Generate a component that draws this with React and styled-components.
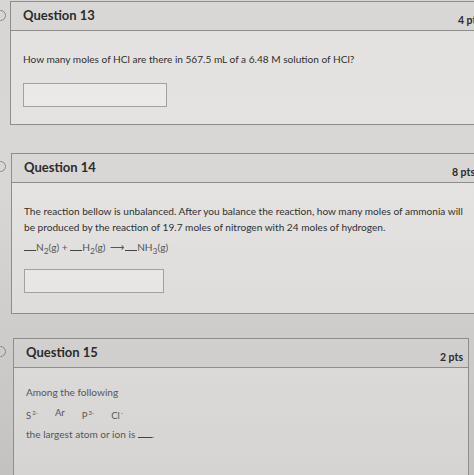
import styled, { createGlobalStyle } from "styled-components";

const GlobalStyle = createGlobalStyle`
    html, body {
        margin: 0;
        padding: 0;
    }
    body {
        width: 474px;
        height: 475px;
        overflow: hidden;
        background: linear-gradient(180deg, #d8d6d4 0%, #d9d7d5 40%, #c4c2c0 100%);
        font-family: Lato, "Open Sans", sans-serif;
        color: #2f2f2f;
    }
`;

const Page = styled.div`
    display: flex;
    flex-direction: column;
    padding-top: 1px;
`;

const Row = styled.div`
    display: flex;
    align-items: flex-start;
    margin-top: ${p => p.$top}px;
`;

const Gutter = styled.div`
    width: ${p => p.$gutter}px;
    flex: none;
    display: flex;
    justify-content: flex-start;
    padding-top: ${p => p.$markTop}px;
    overflow: hidden;
`;

const Marker = styled.span`
    display: block;
    width: 9px;
    height: 9px;
    margin-left: -5px;
    border: 1.5px solid #8a8886;
    border-radius: 50%;
    flex: none;
`;

const Card = styled.section`
    flex: none;
    width: ${p => p.$width}px;
    min-height: ${p => p.$height}px;
    border: 1px solid #8f8d8b;
    background: rgba(255, 255, 255, 0.3);
    box-sizing: border-box;
`;

const Header = styled.header`
    display: flex;
    justify-content: space-between;
    align-items: flex-start;
    height: 29px;
    padding: 5px 0 0 12px;
    box-sizing: border-box;
    background: rgba(120, 118, 116, 0.1);
    border-bottom: 1px solid #8f8d8b;
`;

const Title = styled.h2`
    margin: 0;
    font-size: 13px;
    font-weight: 700;
    color: #2b2b2b;
`;

const Points = styled.span`
    margin-top: 7px;
    margin-right: ${p => p.$right}px;
    font-size: 10.5px;
    font-weight: 700;
    color: #2b2b2b;
    white-space: nowrap;
`;

const Body = styled.div`
    padding: ${p => p.$pad}px 10px 0 12px;
    font-size: 10.1px;
    line-height: 16px;
`;

const Text = styled.p`
    margin: 0 0 ${p => p.$gap || 0}px;
    color: ${p => p.$muted ? "#555" : "#2f2f2f"};
`;

const Blank = styled.span`
    display: inline-block;
    width: ${p => p.$w || 12}px;
    border-bottom: 1px solid #444;
    height: 9px;
    vertical-align: baseline;
`;

const Arrow = styled.span`
    margin: 0 2px;
    letter-spacing: -1px;
`;

const Input = styled.div`
    width: ${p => p.$w}px;
    height: 24px;
    box-sizing: border-box;
    border: 1px solid #a3a19f;
    background: rgba(255, 255, 255, 0.25);
`;

const Ions = styled.div`
    display: flex;
    gap: 17px;
    margin: 5px 0 2px;
    color: #555;
    font-size: 9.5px;
    sup {
        font-size: 6px;
        margin-left: 1px;
    }
`;

export default function App() {
    return (
        <>
            <GlobalStyle />
            <Page>
                <Row $top={0}>
                    <Gutter $gutter={10} $markTop={9}><Marker /></Gutter>
                    <Card $width={480} $height={124}>
                        <Header>
                            <Title>Question 13</Title>
                            <Points $right={8}>4 pts</Points>
                        </Header>
                        <Body $pad={20}>
                            <Text $gap={16}>How many moles of HCl are there in 567.5 mL of a 6.48 M solution of HCl?</Text>
                            <Input $w={144} />
                        </Body>
                    </Card>
                </Row>
                <Row $top={28}>
                    <Gutter $gutter={11} $markTop={8}><Marker /></Gutter>
                    <Card $width={470} $height={161}>
                        <Header>
                            <Title>Question 14</Title>
                            <Points $right={5}>8 pts</Points>
                        </Header>
                        <Body $pad={20}>
                            <Text $gap={4}>
                                The reaction bellow is unbalanced. After you balance the reaction, how many moles of ammonia will
                                be produced by the reaction of 19.7 moles of nitrogen with 24 moles of hydrogen.
                            </Text>
                            <Text $muted $gap={10}>
                                <Blank />N<sub>2</sub>(g) + <Blank />H<sub>2</sub>(g) <Arrow>⟶</Arrow><Blank />NH<sub>3</sub>(g)
                            </Text>
                            <Input $w={140} />
                        </Body>
                    </Card>
                </Row>
                <Row $top={24}>
                    <Gutter $gutter={13} $markTop={8}><Marker /></Gutter>
                    <Card $width={456} $height={140}>
                        <Header>
                            <Title>Question 15</Title>
                            <Points $right={5}>2 pts</Points>
                        </Header>
                        <Body $pad={16}>
                            <Text $muted>Among the following</Text>
                            <Ions>
                                <span>S<sup>2-</sup></span>
                                <span>Ar</span>
                                <span>P<sup>3-</sup></span>
                                <span>Cl<sup>-</sup></span>
                            </Ions>
                            <Text $muted>the largest atom or ion is <Blank $w={14} />.</Text>
                        </Body>
                    </Card>
                </Row>
            </Page>
        </>
    );
}
